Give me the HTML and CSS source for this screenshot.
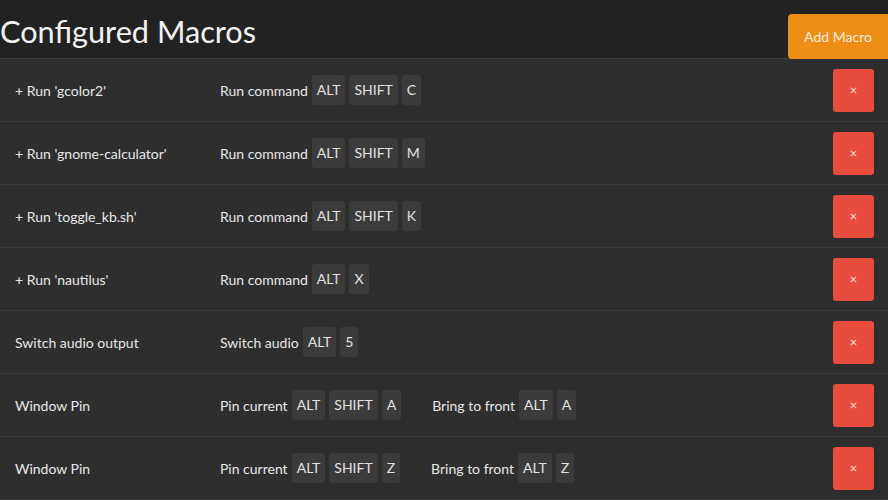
FILE: index.html
```html
<!DOCTYPE html>
<html>
<head>
<meta charset="utf-8">
<link rel="stylesheet" href="styles.css">
</head>
<body>
<div class="page">
  <header class="header">
    <h1 class="title">Configured Macros</h1>
    <button class="add-btn">Add Macro</button>
  </header>
  <div class="list">
    <div class="row">
      <div class="name">+ Run 'gcolor2'</div>
      <div class="actions">
        <div class="action"><span class="label">Run command</span><span class="key">ALT</span><span class="key">SHIFT</span><span class="key">C</span></div>
      </div>
      <button class="del">×</button>
    </div>
    <div class="row">
      <div class="name">+ Run 'gnome-calculator'</div>
      <div class="actions">
        <div class="action"><span class="label">Run command</span><span class="key">ALT</span><span class="key">SHIFT</span><span class="key">M</span></div>
      </div>
      <button class="del">×</button>
    </div>
    <div class="row">
      <div class="name">+ Run 'toggle_kb.sh'</div>
      <div class="actions">
        <div class="action"><span class="label">Run command</span><span class="key">ALT</span><span class="key">SHIFT</span><span class="key">K</span></div>
      </div>
      <button class="del">×</button>
    </div>
    <div class="row">
      <div class="name">+ Run 'nautilus'</div>
      <div class="actions">
        <div class="action"><span class="label">Run command</span><span class="key">ALT</span><span class="key">X</span></div>
      </div>
      <button class="del">×</button>
    </div>
    <div class="row">
      <div class="name">Switch audio output</div>
      <div class="actions">
        <div class="action"><span class="label">Switch audio</span><span class="key">ALT</span><span class="key">5</span></div>
      </div>
      <button class="del">×</button>
    </div>
    <div class="row">
      <div class="name">Window Pin</div>
      <div class="actions">
        <div class="action"><span class="label">Pin current</span><span class="key">ALT</span><span class="key">SHIFT</span><span class="key">A</span></div>
        <div class="action"><span class="label">Bring to front</span><span class="key">ALT</span><span class="key">A</span></div>
      </div>
      <button class="del">×</button>
    </div>
    <div class="row">
      <div class="name">Window Pin</div>
      <div class="actions">
        <div class="action"><span class="label">Pin current</span><span class="key">ALT</span><span class="key">SHIFT</span><span class="key">Z</span></div>
        <div class="action"><span class="label">Bring to front</span><span class="key">ALT</span><span class="key">Z</span></div>
      </div>
      <button class="del">×</button>
    </div>
  </div>
</div>
</body>
</html>
```
FILE: styles.css
```css
html, body {
  margin: 0;
  padding: 0;
  background: #222222;
  color: #e6e6e6;
  font-family: Lato, "Open Sans", sans-serif;
  overflow: hidden;
}
.page {
  width: 888px;
}
.header {
  height: 58px;
  display: flex;
  justify-content: space-between;
  align-items: flex-start;
}
.title {
  margin: 14px 0 0 0;
  font-size: 30.7px;
  font-weight: 400;
  line-height: 36px;
  color: #f2f2f2;
}
.add-btn {
  margin-top: 14px;
  width: 100px;
  height: 45px;
  border: none;
  border-radius: 4px 0 0 4px;
  background: #ef8e17;
  color: #fbeedd;
  font-family: Lato, sans-serif;
  font-size: 14px;
  padding: 0;
  position: relative;
  z-index: 1;
}
.list {
  border-top: 1px solid #3a3a3a;
  background: #2e2e2e;
}
.row {
  height: 62px;
  border-bottom: 1px solid #3d3d3d;
  display: flex;
  align-items: center;
  padding: 0 14px 0 15px;
}
.name {
  width: 205px;
  font-size: 14px;
  color: #e8e8e8;
}
.actions {
  flex: 1;
  display: flex;
  align-items: center;
  gap: 31px;
}
.action {
  display: flex;
  align-items: center;
  gap: 4px;
  font-size: 14px;
}
.label {
  margin-right: 0;
  color: #e8e8e8;
}
.key {
  background: #3b3b3b;
  border-radius: 3px;
  height: 30px;
  line-height: 30px;
  padding: 0 5px;
  color: #e2e2e2;
}
.del {
  width: 41px;
  height: 43px;
  border: none;
  border-radius: 3px;
  background: #e74c3c;
  color: #f7e1dd;
  font-family: Lato, sans-serif;
  font-size: 13px;
  padding: 0;
}
```
